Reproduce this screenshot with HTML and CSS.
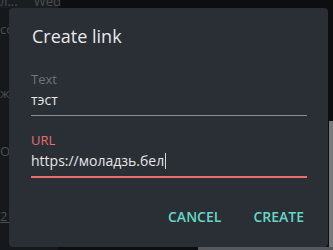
FILE: index.html
```html
<!DOCTYPE html>
<html>
<head>
<meta charset="utf-8">
<link rel="stylesheet" href="styles.css">
</head>
<body>
<div class="app">
  <div class="sidebar">
    <div class="row r1"><span class="name">л...</span><span class="time">Wed</span></div>
    <div class="row r2"><span class="name">co</span></div>
    <div class="row r3"><span class="name">ж</span></div>
    <div class="row r4"><span class="name">O</span></div>
    <div class="row r5"><span class="name u">21</span></div>
    <div class="row r6"><span class="dot"></span></div>
  </div>
  <div class="main">
    <div class="scroll"></div>
  </div>
</div>
<div class="footer-strip"></div>

<div class="dialog">
  <div class="title">Create link</div>
  <div class="field">
    <div class="label">Text</div>
    <div class="input">тэст</div>
  </div>
  <div class="field focused">
    <div class="label">URL</div>
    <div class="input">https://моладзь.бел<span class="caret"></span></div>
  </div>
  <div class="actions">
    <span class="btn">CANCEL</span>
    <span class="btn">CREATE</span>
  </div>
</div>
</body>
</html>
```
FILE: styles.css
```css
html, body {
  margin: 0;
  padding: 0;
}
body {
  width: 333px;
  height: 250px;
  overflow: hidden;
  background: #0d0e10;
  font-family: "Open Sans", "Noto Sans", sans-serif;
  position: relative;
}
.app {
  display: flex;
  height: 250px;
}
.sidebar {
  width: 58px;
  background: #16191c;
  color: #4a4e53;
  font-size: 13px;
  line-height: 16px;
}
.row {
  display: flex;
  gap: 10px;
  padding-left: 0;
}
.r1 { margin-top: -7px; background: #1b1e21; height: 15px; }
.r2 { margin-top: 13px; }
.r3 { margin-top: 48px; }
.r4 { margin-top: 42px; }
.r5 { margin-top: 49px; }
.r6 { margin-top: 17px; }
.time { margin-left: 6px; }
.u { text-decoration: underline; }
.dot {
  display: block;
  width: 3px;
  height: 6px;
  margin-left: 17px;
  background: #3aa89a;
}
.main {
  flex: 1;
  display: flex;
  justify-content: flex-end;
}
.scroll {
  width: 4px;
  margin-top: 121px;
  background: #7a7a7a;
}
.footer-strip {
  position: absolute;
  left: 198px;
  right: 0;
  bottom: 0;
  height: 3px;
  background: #55585c;
}
.dialog {
  position: absolute;
  left: 9px;
  top: 8px;
  width: 319px;
  height: 239px;
  box-sizing: border-box;
  padding: 16px 21px 0 22px;
  background: #2a2e35;
  border-radius: 4px;
  display: flex;
  flex-direction: column;
}
.title {
  font-size: 18px;
  line-height: 24px;
  font-weight: 500;
  color: #e8e8e8;
  padding-left: 1px;
}
.field {
  display: flex;
  flex-direction: column;
  gap: 3px;
}
.title + .field { margin-top: 23px; }
.field + .field { margin-top: 16px; }
.label {
  font-size: 13px;
  line-height: 16px;
  color: #707377;
}
.input {
  font-size: 14px;
  line-height: 20px;
  color: #e6e6e6;
  padding-bottom: 5px;
  border-bottom: 1px solid #8a8c8f;
  display: flex;
  align-items: center;
}
.focused .label { color: #e76d6d; }
.focused .input { border-bottom: 2px solid #ee6e6e; }
.caret {
  display: inline-block;
  width: 1px;
  height: 16px;
  margin-left: 1px;
  background: #d8d8d8;
}
.actions {
  margin-top: 21px;
  display: flex;
  justify-content: flex-end;
  gap: 16px;
  margin-right: -5px;
}
.btn {
  font-size: 14px;
  line-height: 20px;
  font-weight: 600;
  color: #66d6c6;
  padding: 8px;
}
```
